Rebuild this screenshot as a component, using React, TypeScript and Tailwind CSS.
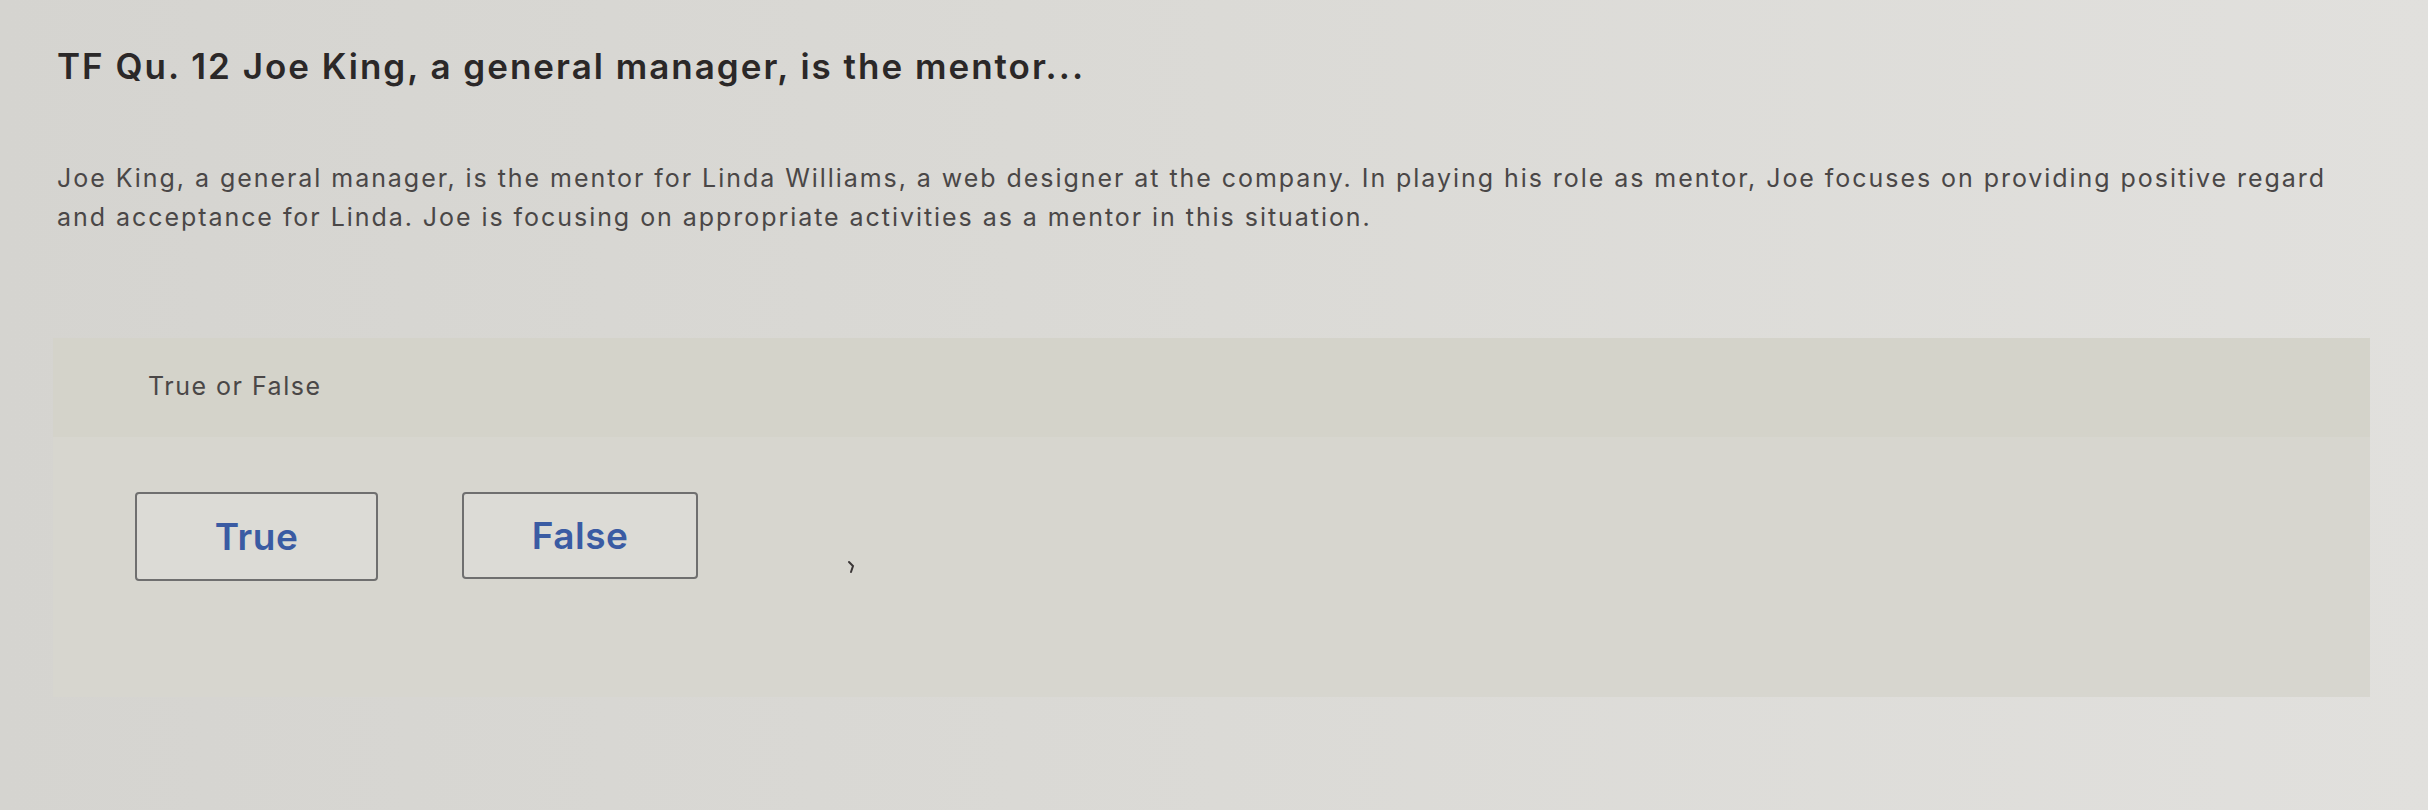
export default function App() {
  return (
    <div
      className="relative min-h-[810px] w-full bg-gradient-to-r from-[#d5d4d0] via-[#dbdad6] to-[#e1e0dd] pl-[57px] pt-[44px] text-left"
      style={{ fontFamily: "Inter, 'Noto Sans', sans-serif" }}
    >
      <h1 className="text-[35px] font-semibold leading-[44px] tracking-[2px] text-[#2b2828]">
        TF Qu. 12 Joe King, a general manager, is the mentor...
      </h1>

      <p className="mt-[71px] w-[2300px] text-[25px] leading-[39px] tracking-[1.95px] text-[#4a4747]">
        Joe King, a general manager, is the mentor for Linda Williams, a web designer at the company. In playing his
        role as mentor, Joe focuses on providing positive regard and acceptance for Linda. Joe is focusing on
        appropriate activities as a mentor in this situation.
      </p>

      <section className="relative ml-[-4px] mt-[101px] w-[2317px] bg-[#d7d6cf]">
        <div className="h-[99px] bg-[#d4d3ca] pl-[95px] pt-[33px]">
          <span className="text-[25px] leading-[30px] tracking-[1.5px] text-[#4a4747]">True or False</span>
        </div>

        <div className="flex gap-[84px] pb-[116px] pl-[82px] pt-[55px]">
          <button className="flex h-[89px] w-[243px] items-center justify-center rounded-[4px] border-2 border-[#6f6f6f] bg-[#dcdbd6] text-[37px] font-semibold tracking-[0.5px] text-[#3a5ba3]">
            True
          </button>
          <button className="flex h-[87px] w-[236px] items-center justify-center rounded-[4px] border-2 border-[#6f6f6f] bg-[#dcdbd6] text-[37px] font-semibold tracking-[0.5px] text-[#3a5ba3]">
            False
          </button>
        </div>

        <svg className="absolute left-[794px] top-[222px]" width="10" height="14" viewBox="0 0 10 14">
          <path d="M2 2 L6 6 L4 12" fill="none" stroke="#3a3636" strokeWidth="2" strokeLinecap="round" />
        </svg>
      </section>
    </div>
  );
}
